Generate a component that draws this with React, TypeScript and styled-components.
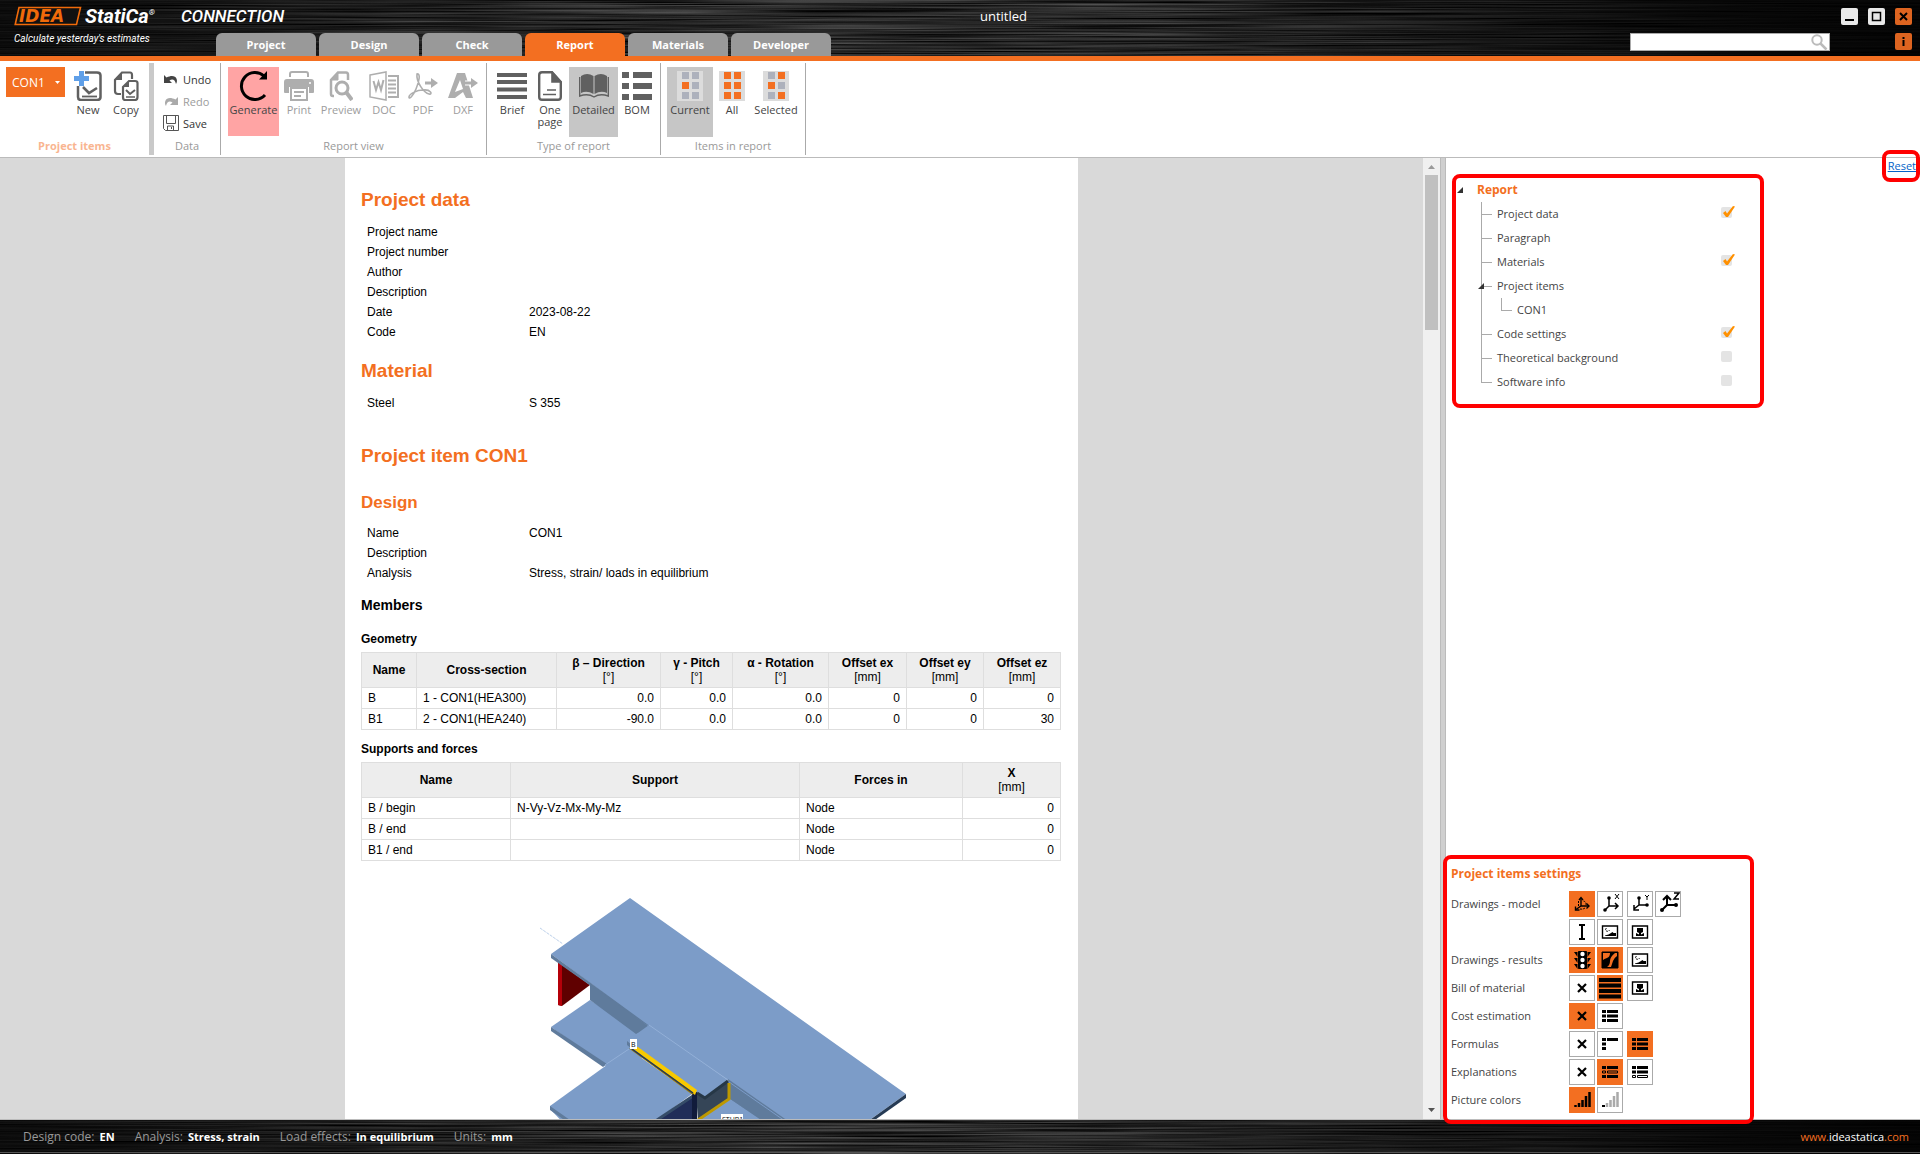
import React, { useState } from "react";
import styled, { createGlobalStyle, css } from "styled-components";

const ORANGE = "#f36f21";
const UI_FONT = '"Segoe UI", "Open Sans", "Noto Sans", sans-serif';
const DOC_FONT = 'Arial, "Liberation Sans", sans-serif';

const GlobalStyle = createGlobalStyle`
  * { box-sizing: border-box; }
  body { margin: 0; background: #fff; }
  button, input { font: inherit; color: inherit; }
`;

const Window = styled.div`
  display: grid;
  grid-template-rows: auto auto minmax(0, 1fr) auto;
  height: 100vh;
  overflow: hidden;
  font-family: ${UI_FONT};
  font-size: 11px;
  color: #444;
`;

/* ---------- brushed metal ---------- */

const MetalSvg = styled.svg`
  position: absolute;
  inset: 0;
  width: 100%;
  height: 100%;
`;

function Metal({ id, seed }: { id: string; seed: number }) {
  return (
    <MetalSvg aria-hidden="true">
      <defs>
        <filter id={id} x="0" y="0" width="100%" height="100%" colorInterpolationFilters="sRGB">
          <feTurbulence type="fractalNoise" baseFrequency="0.004 0.7" numOctaves={3} seed={seed} />
          <feColorMatrix values="0.5 0 0 0 -0.09  0.5 0 0 0 -0.09  0.5 0 0 0 -0.09  0 0 0 0 1" />
        </filter>
        <linearGradient id={id + "shade"}>
          <stop offset="0" stopColor="#000" stopOpacity="0.7" />
          <stop offset="0.12" stopColor="#000" stopOpacity="0.45" />
          <stop offset="0.36" stopColor="#000" stopOpacity="0" />
          <stop offset="0.6" stopColor="#000" stopOpacity="0.1" />
          <stop offset="0.76" stopColor="#000" stopOpacity="0.45" />
          <stop offset="0.9" stopColor="#000" stopOpacity="0.8" />
          <stop offset="1" stopColor="#000" stopOpacity="0.9" />
        </linearGradient>
      </defs>
      <rect width="100%" height="100%" filter={`url(#${id})`} />
      <rect width="100%" height="100%" fill={`url(#${id}shade)`} />
    </MetalSvg>
  );
}

/* ---------- header ---------- */

const Header = styled.header`
  position: relative;
  display: flex;
  height: 61px;
  background: #1b1b1b;
  border-bottom: 5px solid ${ORANGE};
  color: #fff;
`;

const Brand = styled.div`
  position: relative;
  width: 216px;
  padding: 6px 0 0 14px;
  font-family: Roboto, sans-serif;
  font-style: italic;
  white-space: nowrap;
`;

const BrandRow = styled.div`
  display: flex;
  align-items: center;
  height: 20px;
  gap: 3px;
`;

const LogoSvg = styled.svg`
  flex: none;
`;

const Product = styled.span`
  flex: none;
  width: 93px;
  font-size: 20px;
  font-weight: 700;
  sup {
    font-size: 8px;
    font-weight: 400;
    vertical-align: 8px;
    line-height: 0;
  }
`;

const Module = styled.span`
  flex: none;
  font-size: 17px;
  font-weight: 500;
`;

const Tagline = styled.div`
  padding-top: 6px;
  font-size: 10px;
  line-height: 14px;
`;

const HeaderMain = styled.div`
  position: relative;
  flex: 1;
  display: flex;
  flex-direction: column;
`;

const WindowTitle = styled.div`
  height: 33px;
  padding-right: 39px;
  font-size: 13px;
  line-height: 33px;
  text-align: center;
`;

const TabRow = styled.div`
  display: flex;
  justify-content: space-between;
  align-items: flex-start;
`;

const Tabs = styled.nav`
  display: flex;
  gap: 3px;
`;

const Tab = styled.button<{ $active?: boolean }>`
  width: 100px;
  height: 23px;
  padding: 0;
  border: 0;
  border-radius: 6px 6px 0 0;
  background: ${(p) => (p.$active ? ORANGE : "#999")};
  color: #fff;
  font-weight: 700;
`;

const SearchBox = styled.label`
  display: flex;
  align-items: center;
  width: 200px;
  height: 18px;
  padding-right: 1px;
  border: 1px solid #aaa;
  background: #fff;
  input {
    flex: 1;
    min-width: 0;
    height: 14px;
    border: 0;
    outline: 0;
    background: transparent;
    color: #333;
  }
`;

const WindowControls = styled.div`
  position: relative;
  display: grid;
  grid-template-columns: 17px 17px 17px;
  grid-auto-rows: 17px;
  gap: 8px 10px;
  justify-content: end;
  width: 90px;
  padding: 8px 8px 0 0;
`;

const WindowButton = styled.button<{ $accent?: boolean }>`
  display: flex;
  align-items: center;
  justify-content: center;
  padding: 0;
  border: 0;
  border-radius: 2px;
  background: ${(p) => (p.$accent ? "#dd6420" : "#e8e8e8")};
  &:last-child { grid-column: 3; }
`;

/* ---------- ribbon ---------- */

const Ribbon = styled.div`
  display: flex;
  height: 97px;
  padding-top: 2px;
  border-bottom: 1px solid #bbb;
  background: #fff;
`;

const Group = styled.section<{ $pad: number; $width: number; $thick?: boolean }>`
  display: flex;
  flex-direction: column;
  flex: none;
  width: ${(p) => p.$width}px;
  height: 92px;
  border-right: ${(p) => (p.$thick ? "5px solid #c9c9c9" : "1px solid #aaa")};
  padding: 4px 0 0 ${(p) => p.$pad}px;
`;

const GroupTools = styled.div`
  display: flex;
  gap: 2px;
  height: 70px;
`;

const GroupLabel = styled.div<{ $accent?: boolean; $pad: number }>`
  margin-left: -${(p) => p.$pad}px;
  line-height: 18px;
  text-align: center;
  color: ${(p) => (p.$accent ? "#f9b591" : "#999")};
  font-weight: ${(p) => (p.$accent ? 700 : 400)};
`;

const ItemPicker = styled.button`
  display: flex;
  align-items: center;
  justify-content: space-between;
  width: 59px;
  height: 30px;
  margin-right: 3px;
  padding: 0 5px 0 6px;
  border: 0;
  background: ${ORANGE};
  color: #fff;
  font-size: 12px;
`;

const Tool = styled.button<{ $w: number; $tone?: "hot" | "on"; $off?: boolean }>`
  display: flex;
  flex-direction: column;
  align-items: center;
  flex: none;
  width: ${(p) => p.$w}px;
  height: ${(p) => (p.$tone === "hot" ? 69 : 70)}px;
  padding: 4px 0 0;
  border: 0;
  background: ${(p) => (p.$tone === "hot" ? "#ffa4a4" : p.$tone === "on" ? "#c6c6c6" : "transparent")};
  color: ${(p) => (p.$off ? "#9c9c9c" : "#444")};
  line-height: 12px;
  span { padding-top: 3px; }
  svg { flex: none; color: ${(p) => (p.$off ? "#aeaeae" : "#606060")}; }
`;

const ToolStack = styled.div`
  display: flex;
  flex-direction: column;
  padding-top: 1px;
`;

const SmallTool = styled.button<{ $off?: boolean }>`
  display: flex;
  align-items: center;
  gap: 4px;
  height: 22px;
  padding: 0;
  border: 0;
  background: transparent;
  color: ${(p) => (p.$off ? "#9c9c9c" : "#333")};
`;

/* ---------- body ---------- */

const Body = styled.main`
  display: grid;
  grid-template-columns: minmax(0, 1fr) 17px 6px 474px;
  min-height: 0;
`;

const Preview = styled.div`
  display: flex;
  justify-content: center;
  overflow: hidden;
  background: #d9d9d9;
`;

const ScrollTrack = styled.div`
  display: flex;
  flex-direction: column;
  align-items: center;
  padding: 7px 0;
  background: #f0f0f0;
`;

const ScrollThumb = styled.div`
  width: 13px;
  height: 155px;
  margin: 6px 0 auto;
  background: #c0c0c0;
`;

const Splitter = styled.div`
  border: 1px solid #bbb;
  border-width: 0 1px;
  background: #cfcfcf;
`;

const Page = styled.article`
  width: 733px;
  padding: 30px 18px 0 16px;
  overflow: hidden;
  background: #fff;
  font-family: ${DOC_FONT};
  font-size: 12px;
  line-height: 20px;
  color: #000;
`;

const Title = styled.h1<{ $gap: number }>`
  margin: ${(p) => p.$gap}px 0 10px;
  font-size: 19px;
  line-height: 24px;
  color: ${ORANGE};
`;

const Subtitle = styled.h2`
  margin: 25px 0 10px;
  font-size: 17px;
  line-height: 20px;
  color: ${ORANGE};
`;

const Heading = styled.h3`
  margin: 12px 0 14px;
  font-size: 14px;
  line-height: 20px;
`;

const Caption = styled.h4`
  margin: 9px 0 3px;
  font-size: 12px;
  line-height: 20px;
`;

const Facts = styled.dl`
  display: grid;
  grid-template-columns: 162px 1fr;
  grid-auto-rows: 20px;
  margin: 0;
  padding-left: 6px;
  dd { margin: 0; }
`;

const Table = styled.table`
  width: 100%;
  table-layout: fixed;
  border-collapse: collapse;
  line-height: 14px;
  th, td {
    padding: 3px 6px;
    border: 1px solid #dedede;
    text-align: left;
    white-space: nowrap;
  }
  td { height: 21px; }
  th { background: #ededed; text-align: center; }
  th small { display: block; font-size: 12px; font-weight: 400; }
`;

const NumCell = styled.td`
  && { text-align: right; }
`;

const ModelSvg = styled.svg`
  display: block;
  margin: 10px auto 0;
`;

/* ---------- side panel ---------- */

const callout = css`
  border: 4px solid #f00;
  border-radius: 8px;
`;

const Side = styled.aside`
  position: relative;
  z-index: 1;
  display: flex;
  flex-direction: column;
  align-items: flex-start;
  background: #fff;
`;

const ResetLink = styled.a`
  position: relative;
  align-self: flex-end;
  margin-right: 4px;
  line-height: 16px;
  color: #0563c8;
  &::after {
    content: "";
    position: absolute;
    inset: -8px -4px -8px -6px;
    ${callout}
  }
`;

const Tree = styled.ul`
  width: 312px;
  margin: 0 0 0 6px;
  padding: 0 28px 10px 1px;
  list-style: none;
  ${callout}
`;

const TreeRow = styled.li`
  display: flex;
  align-items: center;
  height: 24px;
`;

const Arrow = styled.svg`
  flex: none;
`;

const RootLabel = styled.span`
  margin-left: 14px;
  padding-bottom: 1px;
  font-size: 12px;
  font-weight: 700;
  color: ${ORANGE};
`;

const Branch = styled.span<{ $kind: "mid" | "last" | "through" | "child" }>`
  display: flex;
  align-items: center;
  flex: none;
  width: ${(p) => (p.$kind === "through" ? 20 : 16)}px;
  height: 24px;
  background:
    linear-gradient(#aaa, #aaa) 0 0 / 1px ${(p) => (p.$kind === "last" || p.$kind === "child" ? "50%" : "100%")} no-repeat,
    linear-gradient(#aaa, #aaa) 0 12px / ${(p) => (p.$kind === "through" ? 0 : 11)}px 1px no-repeat;
  svg { margin-left: -3px; }
`;

const Indent = styled.span`
  flex: none;
  width: 24px;
`;

const TreeLabel = styled.label`
  flex: 1;
  padding-bottom: 2px;
`;

const Check = styled.span`
  position: relative;
  display: flex;
  margin-bottom: 3px;
  input {
    appearance: none;
    width: 11px;
    height: 11px;
    margin: 0;
    border-radius: 2px;
    background: #e4e4e4;
  }
  svg {
    position: absolute;
    left: 2px;
    top: -1px;
    pointer-events: none;
  }
`;

const Settings = styled.section`
  position: relative;
  width: 308px;
  margin-top: auto;
  padding: 0 0 6px 5px;
  &::after {
    content: "";
    position: absolute;
    inset: -8px 0 -5px -3px;
    pointer-events: none;
    ${callout}
  }
`;

const SettingsTitle = styled.h2`
  margin: 0 0 6px;
  font-size: 12px;
  line-height: 22px;
  color: ${ORANGE};
`;

const SettingRows = styled.div`
  display: grid;
  gap: 2px;
`;

const SettingRow = styled.div`
  display: grid;
  grid-template-columns: 118px 28px 30px 28px 26px;
  align-items: center;
  height: 26px;
`;

const SettingLabel = styled.span`
  padding-bottom: 2px;
`;

const OptionButton = styled.button<{ $on?: boolean }>`
  display: flex;
  align-items: center;
  justify-content: center;
  width: 26px;
  height: 26px;
  padding: 0;
  border: 1px solid ${(p) => (p.$on ? ORANGE : "#aaa")};
  background: ${(p) => (p.$on ? ORANGE : "#fff")};
  svg { flex: none; }
`;

/* ---------- status bar ---------- */

const StatusBar = styled.footer`
  position: relative;
  height: 35px;
  border-top: 1px solid #bbb;
  background: #151515;
  color: #999;
`;

const StatusContent = styled.div`
  position: relative;
  display: flex;
  align-items: center;
  gap: 20px;
  height: 33px;
  padding: 1px 11px 0 23px;
  border-bottom: 1px solid #555;
  font-size: 12px;
  b { padding-left: 2px; font-size: 11px; color: #fff; }
`;

const Site = styled.a`
  margin-left: auto;
  font-size: 11px;
  color: ${ORANGE};
  text-decoration: none;
  span { color: #fff; }
`;

/* ---------- ribbon icons ---------- */

const I30 = ({ w = 30, children }: { w?: number; children: React.ReactNode }) => (
  <svg width={w} height="30" viewBox={`0 0 ${w} 30`} fill="none" stroke="currentColor">{children}</svg>
);

const NewIcon = () => (
  <I30>
    <path d="M12 1.500H24Q27.500 1.500 27.500 4.500V26Q27.500 29 24 29H8Q5 29 5 26V15" strokeWidth="2.500" />
    <path d="M9 25.500h15" strokeWidth="1.800" />
    <path d="M10 16l6 6 8-5" strokeWidth="2.600" />
    <path d="M6 0h5v5h5v5h-5v5H6v-5H1V5h5z" fill="#5f9fe8" stroke="none" />
  </I30>
);
const CopyIcon = () => (
  <I30 w={26}>
    <path d="M8 23H5Q2 23 2 20V9L9 1.500H17Q19 1.500 19 4V8" strokeWidth="2.200" />
    <path d="M9 1v8H2z" fill="currentColor" stroke="none" />
    <path d="M10 16 16 10H22Q24.500 10 24.500 12V26Q24.500 29 22 29H12Q10 29 10 26Z" strokeWidth="2.200" />
    <path d="M16 10v6h-6z" fill="currentColor" stroke="none" />
    <path d="m13 19 4 4 5-4" strokeWidth="2" />
    <path d="M13 26h9" strokeWidth="1.500" />
  </I30>
);
const GenerateIcon = () => (
  <I30>
    <path d="M26 24A13.500 13.500 0 1 1 25 5" stroke="#000" strokeWidth="3" />
    <path d="M28 0v8.500H20z" fill="#000" stroke="none" />
  </I30>
);
const PrintIcon = () => (
  <I30>
    <path d="M6 6V3Q6 1 8 1H22Q24 1 24 3V6" strokeWidth="2" />
    <path d="M3 8H27Q30 8 30 11V21Q30 22 29 22H25V16H5V22H1Q0 22 0 21V11Q0 8 3 8Z" fill="currentColor" stroke="none" />
    <path d="M7 17h16v12H7zM10 21h10M10 25h7" strokeWidth="2" />
    <circle cx="26" cy="12" r="1" fill="#fff" stroke="none" />
  </I30>
);
const PreviewIcon = () => (
  <I30 w={24}>
    <path d="M5 25H4Q2 25 2 23V9L9 1.500H17Q19 1.500 19 4V9" strokeWidth="2.500" />
    <path d="M9 1v8H2z" fill="currentColor" />
    <circle cx="13" cy="17" r="6" strokeWidth="3" />
    <path d="m17 21 6 8" strokeWidth="4" />
  </I30>
);
const DocIcon = () => (
  <I30>
    <path d="M1 4 17 1V29L1 26Z" strokeWidth="1.500" />
    <path d="m4.500 10 2.500 9 2.500-8 2.500 8 2.500-10" strokeWidth="2" />
    <path d="M19 5h10v21H19M19 9.500h8M19 13.500h8M19 17.500h8M19 21.500h8" strokeWidth="2" />
  </I30>
);
const PdfIcon = () => (
  <I30>
    <path d="M9 3c4-1 2 8-1 15-3 7-7 11-7 8 0-3 8-7 14-7 8-1 10 5 6 4-5-1-13-12-12-20z" strokeWidth="1.600" />
    <path d="M17 12h9" strokeWidth="3" />
    <path d="m23 7 7 5-7 5z" fill="currentColor" stroke="none" />
  </I30>
);
const DxfIcon = () => (
  <I30>
    <path d="M9 2h8l8 25h-7l-3-6-8 6H0zM12 9l-5 12 8-3z" fill="currentColor" fillRule="evenodd" stroke="none" />
    <path d="M17 12h9" stroke="#fff" strokeWidth="5" />
    <path d="M17 12h9" strokeWidth="3" />
    <path d="m23 7 7 5-7 5z" fill="currentColor" stroke="none" />
  </I30>
);
const BriefIcon = () => <I30><path d="M0 4h30M0 11h30M0 18.500h30M0 26h30" strokeWidth="4" /></I30>;
const PageIcon = () => (
  <I30 w={24}>
    <path d="M14 1.200H4Q1.200 1.200 1.200 4V26Q1.200 28.800 4 28.800H20Q22.800 28.800 22.800 26V11Z" strokeWidth="2.400" />
    <path d="M14 1v10h9zM9 19h9M5 23.500h13" fill="currentColor" strokeWidth="1.600" />
  </I30>
);
const BookIcon = () => (
  <I30>
    <path d="M2 5Q8 1 14.500 5V23Q8 19 2 22ZM28 5Q22 1 15.500 5V23Q22 19 28 22Z" fill="currentColor" stroke="none" />
    <path d="M.7 6V25Q9 22 15 26 21 22 29.300 25V6" strokeWidth="1.400" />
  </I30>
);
const BomIcon = () => (
  <I30>
    <path d="M0 4h7M11 4h19M0 15h7M11 15h19M0 26h7M11 26h19" strokeWidth="6" />
  </I30>
);
const GridIcon = ({ on }: { on: number[] }) => (
  <I30 w={26}>
    <rect width="26" height="30" fill="#dcdcdc" stroke="none" />
    {[0, 1, 2, 3, 4, 5].map((i) => (
      <rect key={i} x={5 + (i % 2) * 10} y={1 + Math.floor(i / 2) * 10} width="7" height="7"
        fill={on.includes(i) ? ORANGE : "#adb1bc"} stroke="none" />
    ))}
  </I30>
);
const UndoIcon = ({ flip }: { flip?: boolean }) => (
  <svg width="16" height="12" viewBox="0 0 16 12">
    <g transform={flip ? "translate(16 0) scale(-1 1)" : undefined}>
      <path d="M1 2v8h8L6.500 7.500C9 5.500 12 6 13 11 16 6 12 0 3.500 4.500z" fill={flip ? "#aaa" : "#444"} />
    </g>
  </svg>
);
const SaveIcon = () => (
  <svg width="16" height="16" viewBox="0 0 16 16" fill="none" stroke="#555">
    <path d="M.5.500h15v15h-13l-2-2zM3.500.500v8h9v-8M4.500 15v-4h6v4M8.500 12v2" />
  </svg>
);

/* ---------- option icons ---------- */

const I24 = ({ children }: { children: React.ReactNode }) => (
  <svg width="24" height="24" viewBox="0 0 24 24" fill="none" stroke="#000">{children}</svg>
);

const optionIcons: Record<string, React.ReactNode> = {
  iso: <I24><path d="M6 17.500 11 14 19 14M11 14V6" strokeWidth="1.400" /><path d="M9 8l2-2.500L13 8M5.500 14.500v3.500h4M16.500 11.500 19 14l-2.500 2.500" strokeWidth="1.400" /><path d="M8.500 14V9M13.500 9q3 1 2.500 4M10 17q3 .5 5-1" strokeDasharray="2 1" /></I24>,
  axisX: <I24><path d="M11 6v8l-4 4M11 14h8M17 11l3 3-3 3" strokeWidth="1.500" /><circle cx="11" cy="6" r="1.800" fill="#000" stroke="none" /><circle cx="7" cy="18" r="1.800" fill="#000" stroke="none" /><path d="m17 2 4 5M21 2l-4 5" /></I24>,
  axisY: <I24><path d="M11 6v7l-5 4M11 13h7M6 13v5h5" strokeWidth="1.500" /><circle cx="11" cy="6" r="1.800" fill="#000" stroke="none" /><circle cx="19" cy="13" r="1.800" fill="#000" stroke="none" /><path d="m17 3 2 2 2-2M19 5v3" /></I24>,
  axisZ: <I24><path d="M11 5v8l-5 5M11 13h9M7 8l4-4 4 4" strokeWidth="2" /><circle cx="6" cy="18" r="2" fill="#000" stroke="none" /><circle cx="20" cy="13" r="2" fill="#000" stroke="none" /><path d="M18 1h5l-5 6h5" strokeWidth="1.500" /></I24>,
  section: <I24><path d="M9 5h6M9 19h6M12 5v14" strokeWidth="2" /></I24>,
  image: <I24><path d="M4.500 6h15v12h-15z" strokeWidth="1.400" /><path d="m7 15.500 3.500-1 2.500-1.500 1.500-1 1 1H18v3H7z" fill="#000" stroke="none" /><path d="M8.500 8q-2 2 0 3 2 1 3-1" strokeDasharray="2 1" /></I24>,
  flower: <I24><path d="M4.500 6h15v12h-15z" strokeWidth="1.400" /><path d="M9 8h6v4l-2 1v1.500l3-1.500v3H8v-3l3 1.500V13l-2-1z" fill="#000" stroke="none" /></I24>,
  lights: <I24><path d="M8.500 3.500h8v17h-8z" fill="#000" /><path d="M4 4h3.500v5zM21 4h-3.500v5zM4 10h3.500v5zM21 10h-3.500v5zM4 16h3.500v5zM21 16h-3.500v5z" fill="#000" stroke="none" /><g fill="#fff" stroke="none"><circle cx="12.500" cy="6" r="2.200" /><circle cx="12.500" cy="12" r="2.200" /><circle cx="12.500" cy="18" r="2.200" /></g></I24>,
  map: <I24><path d="M4 4h16v16H4z" fill="#000" /><path d="M5 5h7q0 4-3 5t-4 2zM19 5v3q-3 2-4 5t-2 6h-4q3-2 3-6t5-8z" fill={ORANGE} stroke="none" /></I24>,
  none: <I24><path d="m8 8 8 8M16 8l-8 8" strokeWidth="2.200" /></I24>,
  lines: <I24><path d="M1 4h22M1 9.500h22M1 15h22M1 20.500h22" strokeWidth="4" /></I24>,
  list: <I24><path d="M4 7.500h4M9 7.500h11M4 12h4M9 12h11M4 16.500h4M9 16.500h11" strokeWidth="3" /></I24>,
  short: <I24><path d="M4 7.500h4M9 7.500h11M4 12h4M4 16.500h4" strokeWidth="3" /></I24>,
  listMid: <I24><path d="M4 7.500h4M9 7.500h11M4 16.500h4M9 16.500h11" strokeWidth="3" /><path d="M4.500 11h3v2h-3zM9.500 11h10v2h-10z" /></I24>,
  listEnd: <I24><path d="M4 7.500h4M9 7.500h11M4 12h4M9 12h11" strokeWidth="3" /><path d="M4.500 15.500h3v2h-3zM9.500 15.500h10v2h-10z" /></I24>,
  bars: <I24><path d="M5.500 19v-2M9 19v-4M12.500 19v-7M16 19V8M19.500 19V4" strokeWidth="2.500" /></I24>,
  barsLight: <I24><path d="M9 19v-4M12.500 19v-7M16 19V8M19.500 19V4" stroke="#aaa" strokeWidth="2.500" /><path d="M5.500 19v-2" strokeWidth="3" /></I24>,
};

/* ---------- 3D model ---------- */

function Model() {
  const top = "#7c9cc8";
  const edge = "#5f7b9c";
  return (
    <ModelSvg width="400" height="320" viewBox="-9 0 400 320" role="img" aria-label="Connection model">
      <path d="M20 57 43 73" stroke="#bcd0ea" strokeDasharray="3 1" />
      <path d="M31 156 70 129 130 168 120 190 86 195Z" fill={top} />
      <path d="M31 156V160L83 196 87 193Z" fill={edge} />
      <path d="M70 113 134 155 116 163 70 129Z" fill={edge} />
      <path d="M38 91 70 114 42 135 38 134Z" fill="#600000" />
      <path d="M38 91 42 94V135L38 134Z" fill="#b50009" />
      <path d="M31 83 110 27 386 223 330 263H285L208 209 128 155Z" fill={top} />
      <path d="M31 83V87L125 153 131 156Z" fill={edge} />
      <path d="M208 208 268 250H241L209 228Z" fill={edge} />
      <path d="M209 211 265 250" stroke="#7c9cc8" />
      <path d="M210 228 244 251V320H150L178 249Z" fill={top} />
      <path d="M107 170 129 154 208 209 185 226 176 223 114 178Z" fill={top} />
      <path d="M107 170V174L112 178V174Z" fill={edge} />
      <path d="M129 154 208 209" stroke="#93b0d8" />
      <path d="M185 226 208 210V228L178 250 176 222Z" fill="#354557" />
      <path d="M177 222 185 227 208 210" stroke="#263746" strokeWidth="3" fill="none" />
      <path d="M209 212V228L178 249" stroke="#bd9800" strokeWidth="3" fill="none" />
      <path d="M30 235 109 178 172 223 138 248 80 290 30 238Z" fill={top} />
      <path d="M85 194 109 178" stroke="#93b0d8" />
      <path d="M30 235V239L80 274V270Z" fill={edge} />
      <path d="M137 250 173 225V290H137Z" fill="#202d58" />
      <path d="M137 249 173 225" stroke="#354c68" strokeWidth="3" />
      <path d="M172 222 177 221V290H172Z" fill="#111b3b" />
      <path d="M112 177 118 176 177 219 175 224Z" fill="#f8c900" />
      <path d="M110 177 173 223" stroke="#8f7412" strokeWidth="2" />
      <path d="M112 178 173 222" stroke="#213757" strokeWidth="1.500" />
      <path d="M386 223V227L345 256H340Z" fill="#263b55" />
      <rect x="110" y="168" width="7" height="10" fill="#fff" />
      <text x="111" y="176" fontSize="7" fontFamily="Open Sans, sans-serif">B</text>
      <rect x="201" y="243" width="22" height="10" fill="#fff" />
      <text x="202" y="251" fontSize="7" fontFamily="Open Sans, sans-serif">STUB1</text>
    </ModelSvg>
  );
}

/* ---------- data ---------- */

const tabNames = ["Project", "Design", "Check", "Report", "Materials", "Developer"];

type TreeItem = { label: string; kind: "mid" | "last" | "child"; check?: boolean; open?: boolean };
const treeItems: TreeItem[] = [
  { label: "Project data", kind: "mid", check: true },
  { label: "Paragraph", kind: "mid" },
  { label: "Materials", kind: "mid", check: true },
  { label: "Project items", kind: "mid", open: true },
  { label: "CON1", kind: "child" },
  { label: "Code settings", kind: "mid", check: true },
  { label: "Theoretical background", kind: "mid", check: false },
  { label: "Software info", kind: "last", check: false },
];

const settings: { label: string; options: [string, boolean][] }[] = [
  { label: "Drawings - model", options: [["iso", true], ["axisX", false], ["axisY", false], ["axisZ", false]] },
  { label: "", options: [["section", false], ["image", false], ["flower", false]] },
  { label: "Drawings - results", options: [["lights", true], ["map", true], ["image", false]] },
  { label: "Bill of material", options: [["none", false], ["lines", true], ["flower", false]] },
  { label: "Cost estimation", options: [["none", true], ["list", false]] },
  { label: "Formulas", options: [["none", false], ["short", false], ["list", true]] },
  { label: "Explanations", options: [["none", false], ["listMid", true], ["listEnd", false]] },
  { label: "Picture colors", options: [["bars", true], ["barsLight", false]] },
];

const geometryCols: [number, string, string?][] = [
  [55, "Name"], [140, "Cross-section"], [104, "β – Direction", "[°]"], [72, "γ - Pitch", "[°]"],
  [96, "α - Rotation", "[°]"], [78, "Offset ex", "[mm]"], [77, "Offset ey", "[mm]"], [77, "Offset ez", "[mm]"],
];
const geometryRows = [
  ["B", "1 - CON1(HEA300)", "0.0", "0.0", "0.0", "0", "0", "0"],
  ["B1", "2 - CON1(HEA240)", "-90.0", "0.0", "0.0", "0", "0", "30"],
];
const supportCols: [number, string, string?][] = [[149, "Name"], [289, "Support"], [163, "Forces in"], [98, "X", "[mm]"]];
const supportRows = [
  ["B / begin", "N-Vy-Vz-Mx-My-Mz", "Node", "0"],
  ["B / end", "", "Node", "0"],
  ["B1 / end", "", "Node", "0"],
];

function DataTable({ cols, rows, numericFrom }: { cols: [number, string, string?][]; rows: string[][]; numericFrom: number }) {
  return (
    <Table>
      <colgroup>{cols.map(([w, name]) => <col key={name} width={w} />)}</colgroup>
      <thead>
        <tr>{cols.map(([, name, unit]) => <th key={name} scope="col">{name}{unit && <small>{unit}</small>}</th>)}</tr>
      </thead>
      <tbody>
        {rows.map((row) => (
          <tr key={row[0]}>
            {row.map((v, i) => (i >= numericFrom ? <NumCell key={i}>{v}</NumCell> : <td key={i}>{v}</td>))}
          </tr>
        ))}
      </tbody>
    </Table>
  );
}

function FactList({ items }: { items: [string, string][] }) {
  return (
    <Facts>
      {items.map(([k, v]) => (
        <React.Fragment key={k}><dt>{k}</dt><dd>{v}</dd></React.Fragment>
      ))}
    </Facts>
  );
}

const OpenArrow = () => (
  <Arrow width="6" height="6" viewBox="0 0 6 6"><path d="M6 0v6H0z" fill="#333" /></Arrow>
);

function TreeEntry({ item }: { item: TreeItem }) {
  const [checked, setChecked] = useState(!!item.check);
  const id = "tree-" + item.label.replace(/\s/g, "-");
  const hasCheck = item.check !== undefined;
  return (
    <TreeRow>
      <Indent />
      {item.kind === "child" && <Branch $kind="through" />}
      <Branch $kind={item.kind}>{item.open && <OpenArrow />}</Branch>
      <TreeLabel htmlFor={hasCheck ? id : undefined}>{item.label}</TreeLabel>
      {hasCheck && (
        <Check>
          <input id={id} type="checkbox" checked={checked} onChange={() => setChecked(!checked)} />
          {checked && (
            <svg width="12" height="12" viewBox="0 0 12 12"><path d="M0 7 2.500 5 4 7.500 10 0 12 .500 5 11 3 11z" fill="#ff9000" /></svg>
          )}
        </Check>
      )}
    </TreeRow>
  );
}

export default function App() {
  return (
    <Window>
      <GlobalStyle />
      <Header>
        <Metal id="metalTop" seed={4} />
        <Brand>
          <BrandRow>
            <LogoSvg width="68" height="28" viewBox="0 -4 68 28">
              <path d="M5 1.500H66.500L62.500 18.500H1.200Z" fill="#111" stroke="#f06a0a" strokeWidth="1.600" />
              <text x="5" y="16" fontFamily="DejaVu Sans, sans-serif" fontSize="17" fontWeight="700" fontStyle="italic" fill="#f06a0a">IDEA</text>
            </LogoSvg>
            <Product>StatiCa<sup>®</sup></Product>
            <Module>CONNECTION</Module>
          </BrandRow>
          <Tagline>Calculate yesterday's estimates</Tagline>
        </Brand>
        <HeaderMain>
          <WindowTitle>untitled</WindowTitle>
          <TabRow>
            <Tabs>{tabNames.map((t) => <Tab key={t} $active={t === "Report"}>{t}</Tab>)}</Tabs>
            <SearchBox>
              <input type="text" aria-label="Search" />
              <svg width="17" height="17" viewBox="0 0 17 17" fill="none" stroke="#bbb">
                <circle cx="6" cy="6" r="4.700" strokeWidth="2" /><path d="m9.500 9.500 6 6" strokeWidth="2.500" />
              </svg>
            </SearchBox>
          </TabRow>
        </HeaderMain>
        <WindowControls>
          <WindowButton aria-label="Minimize"><svg width="11" height="11"><path d="M1 9h9" stroke="#000" strokeWidth="2" /></svg></WindowButton>
          <WindowButton aria-label="Maximize"><svg width="11" height="11"><path d="M1.500 1.500h8v8h-8z" fill="none" stroke="#000" strokeWidth="1.500" /></svg></WindowButton>
          <WindowButton $accent aria-label="Close"><svg width="11" height="11"><path d="m2 2 7 7M9 2 2 9" stroke="#000" strokeWidth="2" /></svg></WindowButton>
          <WindowButton $accent aria-label="Info"><svg width="11" height="11"><path d="M5.500 1v2M5.500 4v6" stroke="#000" strokeWidth="2" /></svg></WindowButton>
        </WindowControls>
      </Header>

      <Ribbon>
        <Group $pad={6} $width={154} $thick>
          <GroupTools>
            <ItemPicker>CON1<svg width="5" height="3"><path d="M0 0h5L2.500 3z" fill="#fff" /></svg></ItemPicker>
            <Tool $w={36}><NewIcon /><span>New</span></Tool>
            <Tool $w={36}><CopyIcon /><span>Copy</span></Tool>
          </GroupTools>
          <GroupLabel $accent $pad={6}>Project items</GroupLabel>
        </Group>
        <Group $pad={9} $width={67}>
          <GroupTools>
            <ToolStack>
              <SmallTool><UndoIcon />Undo</SmallTool>
              <SmallTool $off><UndoIcon flip />Redo</SmallTool>
              <SmallTool><SaveIcon />Save</SmallTool>
            </ToolStack>
          </GroupTools>
          <GroupLabel $pad={9}>Data</GroupLabel>
        </Group>
        <Group $pad={7} $width={266}>
          <GroupTools>
            <Tool $w={51} $tone="hot"><GenerateIcon /><span>Generate</span></Tool>
            <Tool $w={36} $off><PrintIcon /><span>Print</span></Tool>
            <Tool $w={44} $off><PreviewIcon /><span>Preview</span></Tool>
            <Tool $w={38} $off><DocIcon /><span>DOC</span></Tool>
            <Tool $w={36} $off><PdfIcon /><span>PDF</span></Tool>
            <Tool $w={40} $off><DxfIcon /><span>DXF</span></Tool>
          </GroupTools>
          <GroupLabel $pad={7}>Report view</GroupLabel>
        </Group>
        <Group $pad={6} $width={174}>
          <GroupTools>
            <Tool $w={38}><BriefIcon /><span>Brief</span></Tool>
            <Tool $w={34}><PageIcon /><span>One page</span></Tool>
            <Tool $w={49} $tone="on"><BookIcon /><span>Detailed</span></Tool>
            <Tool $w={34}><BomIcon /><span>BOM</span></Tool>
          </GroupTools>
          <GroupLabel $pad={6}>Type of report</GroupLabel>
        </Group>
        <Group $pad={6} $width={145}>
          <GroupTools>
            <Tool $w={46} $tone="on"><GridIcon on={[2]} /><span>Current</span></Tool>
            <Tool $w={34}><GridIcon on={[0, 1, 2, 3, 4, 5]} /><span>All</span></Tool>
            <Tool $w={50}><GridIcon on={[1, 2, 5]} /><span>Selected</span></Tool>
          </GroupTools>
          <GroupLabel $pad={6}>Items in report</GroupLabel>
        </Group>
      </Ribbon>

      <Body>
        <Preview>
          <Page>
            <Title $gap={0}>Project data</Title>
            <FactList items={[["Project name", ""], ["Project number", ""], ["Author", ""], ["Description", ""], ["Date", "2023-08-22"], ["Code", "EN"]]} />
            <Title $gap={17}>Material</Title>
            <FactList items={[["Steel", "S 355"]]} />
            <Title $gap={31}>Project item CON1</Title>
            <Subtitle>Design</Subtitle>
            <FactList items={[["Name", "CON1"], ["Description", ""], ["Analysis", "Stress, strain/ loads in equilibrium"]]} />
            <Heading>Members</Heading>
            <Caption>Geometry</Caption>
            <DataTable cols={geometryCols} rows={geometryRows} numericFrom={2} />
            <Caption>Supports and forces</Caption>
            <DataTable cols={supportCols} rows={supportRows} numericFrom={3} />
            <Model />
          </Page>
        </Preview>
        <ScrollTrack>
          <svg width="7" height="4"><path d="M0 4h7L3.500 0z" fill="#999" /></svg>
          <ScrollThumb />
          <svg width="7" height="4"><path d="M0 0h7L3.500 4z" fill="#555" /></svg>
        </ScrollTrack>
        <Splitter />
        <Side>
          <ResetLink href="#reset">Reset</ResetLink>
          <Tree>
            <TreeRow><OpenArrow /><RootLabel>Report</RootLabel></TreeRow>
            {treeItems.map((item) => <TreeEntry key={item.label} item={item} />)}
          </Tree>
          <Settings>
            <SettingsTitle>Project items settings</SettingsTitle>
            <SettingRows>
              {settings.map((s, i) => (
                <SettingRow key={i}>
                  <SettingLabel>{s.label}</SettingLabel>
                  {s.options.map(([icon, on]) => (
                    <OptionButton key={icon} $on={on} aria-pressed={on} aria-label={icon}>{optionIcons[icon]}</OptionButton>
                  ))}
                </SettingRow>
              ))}
            </SettingRows>
          </Settings>
        </Side>
      </Body>

      <StatusBar>
        <Metal id="metalBottom" seed={9} />
        <StatusContent>
          <span>Design code: <b>EN</b></span>
          <span>Analysis: <b>Stress, strain</b></span>
          <span>Load effects: <b>In equilibrium</b></span>
          <span>Units: <b>mm</b></span>
          <Site href="#site">www.<span>ideastatica</span>.com</Site>
        </StatusContent>
      </StatusBar>
    </Window>
  );
}
